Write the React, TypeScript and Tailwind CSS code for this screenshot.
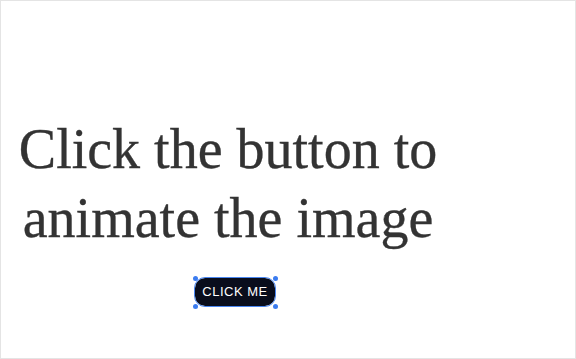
import React from "react";

export default function App() {
  return (
    <div className="w-[576px] h-[359px] bg-white border border-[#e4e4e4] overflow-hidden">
      <div className="flex flex-col pt-[114px]">
        <div
          className="w-[454px] text-center text-[56px] leading-[69px] text-[#333333] [-webkit-text-stroke:0.35px_#333333]"
          style={{ fontFamily: '"Liberation Serif", "Times New Roman", serif' }}
        >
          <div>Click the button to</div>
          <div>animate the image</div>
        </div>
        <div className="mt-[25px] pl-[194px]">
          <div className="relative w-[80px] h-[28px]">
            <button
              className="w-full h-full rounded-[10px] bg-[#090d1c] text-white text-[13px] tracking-[0.5px] outline outline-1 outline-[#4a86f0]"
              style={{ fontFamily: '"Liberation Sans", Arial, sans-serif' }}
            >
              CLICK ME
            </button>
            <span className="absolute -left-[2.5px] -top-[2.5px] w-[5px] h-[5px] rounded-full bg-[#3b7cf0]" />
            <span className="absolute -right-[2.5px] -top-[2.5px] w-[5px] h-[5px] rounded-full bg-[#3b7cf0]" />
            <span className="absolute -left-[2.5px] -bottom-[2.5px] w-[5px] h-[5px] rounded-full bg-[#3b7cf0]" />
            <span className="absolute -right-[2.5px] -bottom-[2.5px] w-[5px] h-[5px] rounded-full bg-[#3b7cf0]" />
          </div>
        </div>
      </div>
    </div>
  );
}
